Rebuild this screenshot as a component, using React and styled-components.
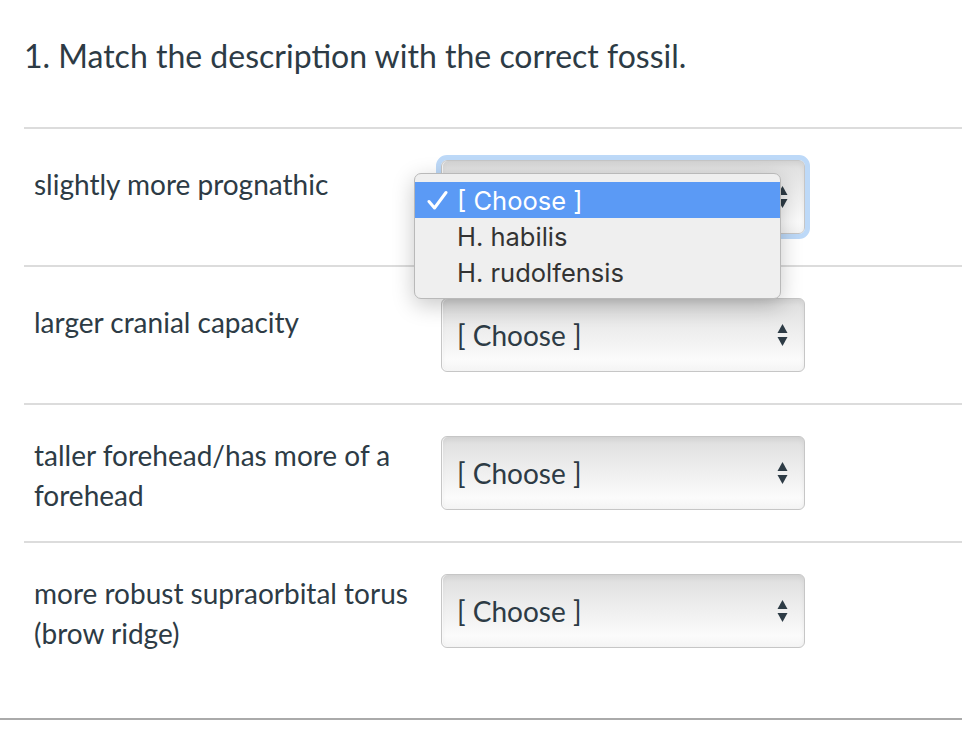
import React from "react";
import styled, { createGlobalStyle } from "styled-components";

const Global = createGlobalStyle`
  html, body { margin: 0; padding: 0; background: #fff; }
  body { overflow: hidden; }
`;

const Page = styled.div`
  width: 962px;
  height: 732px;
  overflow: hidden;
  font-family: Lato, "Open Sans", sans-serif;
  color: #2d3b45;
`;

const Question = styled.div`
  width: 1000px;
  padding-left: 24px;
`;

const Title = styled.h1`
  margin: 0;
  padding-top: 36px;
  height: 127px;
  box-sizing: border-box;
  font-size: 32px;
  font-weight: 400;
  line-height: 40px;
  color: #2d3b45;
`;

const Row = styled.div`
  display: flex;
  align-items: flex-start;
  border-top: 2px solid #dcdcdc;
  padding: 31px 0 0 10px;
  height: 138px;
  box-sizing: border-box;
`;

const Label = styled.div`
  width: 381px;
  margin-right: 26px;
  font-size: 28px;
  line-height: 40px;
  margin-top: ${(p) => p.$offset || 0}px;
`;

const SelectWrap = styled.div`
  position: relative;
`;

const SelectBox = styled.div`
  width: 364px;
  height: 74px;
  box-sizing: border-box;
  border: 1.5px solid #c6c6c6;
  border-radius: 6px;
  background: linear-gradient(to bottom, #dedede 0%, #ececec 40%, #fbfbfb 85%, #f4f4f4 100%);
  box-shadow: inset 0 3px 5px rgba(0, 0, 0, 0.06), inset 1px 0 0 #fff;
  display: flex;
  align-items: center;
  justify-content: space-between;
  padding: 0 16px 0 15px;
  font-size: 28px;
  color: #2d3b45;
  outline: ${(p) => (p.$focused ? "5px solid #bdd9f8" : "none")};
  outline-offset: 0;
`;

const Arrows = styled.svg`
  width: 11px;
  height: 28px;
  flex: none;
`;

const Popup = styled.div`
  position: absolute;
  left: -27px;
  top: 13px;
  width: 367px;
  box-sizing: border-box;
  padding: 8px 0;
  background: #efefef;
  border: 1px solid #b9b9b9;
  border-radius: 7px;
  box-shadow: 0 6px 22px rgba(0, 0, 0, 0.22);
  font-family: Inter, "Liberation Sans", sans-serif;
  font-size: 25.5px;
  color: #333;
  z-index: 2;
`;

const Option = styled.div`
  height: 36px;
  display: flex;
  align-items: center;
  padding-left: 42px;
  position: relative;
  background: ${(p) => (p.$active ? "#5b9af5" : "transparent")};
  color: ${(p) => (p.$active ? "#fff" : "#333")};
`;

const Check = styled.svg`
  position: absolute;
  left: 12px;
  top: 8px;
  width: 21px;
  height: 21px;
`;

const BottomRule = styled.div`
  margin-top: 39px;
  height: 2px;
  background: #aaaaaa;
  width: 962px;
`;

const ArrowIcon = () => (
  <Arrows viewBox="0 0 11 28">
    <path d="M5.5 3 L10.5 12 L0.5 12 Z" fill="#2d3b45" />
    <path d="M0.5 16 L10.5 16 L5.5 25 Z" fill="#2d3b45" />
  </Arrows>
);

const rows = [
  { label: "slightly more prognathic", open: true },
  { label: "larger cranial capacity" },
  { label: "taller forehead/has more of a forehead" },
  { label: "more robust supraorbital torus (brow ridge)" },
];

export default function App() {
  return (
    <Page>
      <Global />
      <Question>
        <Title>1. Match the description with the correct fossil.</Title>
        {rows.map((r, i) => (
          <Row key={i}>
            <Label $offset={i < 2 ? 4 : -1}>{r.label}</Label>
            <SelectWrap>
              <SelectBox $focused={r.open}>
                <span>{r.open ? "" : "[ Choose ]"}</span>
                <ArrowIcon />
              </SelectBox>
              {r.open && (
                <Popup>
                  <Option $active>
                    <Check viewBox="0 0 21 21">
                      <path d="M2 11.5 L7.5 18 L19 2.5" fill="none" stroke="#fff" strokeWidth="3" strokeLinecap="round" strokeLinejoin="round" />
                    </Check>
                    [ Choose ]
                  </Option>
                  <Option>H. habilis</Option>
                  <Option>H. rudolfensis</Option>
                </Popup>
              )}
            </SelectWrap>
          </Row>
        ))}
      </Question>
      <BottomRule />
    </Page>
  );
}
